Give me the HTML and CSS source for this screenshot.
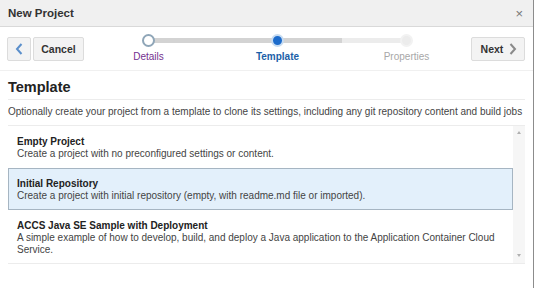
FILE: index.html
```html
<!DOCTYPE html>
<html>
<head>
<meta charset="utf-8">
<link rel="stylesheet" href="styles.css">
</head>
<body>
<div class="dialog">
  <div class="header">
    <span class="title">New Project</span>
    <span class="close">×</span>
  </div>
  <div class="toolbar">
    <button class="btn btn-back" aria-label="Back">
      <svg width="8" height="12" viewBox="0 0 8 12"><path d="M6.5 1 L2 6 L6.5 11" fill="none" stroke="#5b8fcb" stroke-width="2"/></svg>
    </button>
    <button class="btn btn-cancel">Cancel</button>
    <div class="stepper">
      <div class="track"><div class="track-done"></div></div>
      <div class="step done">
        <span class="dot"></span>
        <span class="label">Details</span>
      </div>
      <div class="step current">
        <span class="dot"></span>
        <span class="label">Template</span>
      </div>
      <div class="step todo">
        <span class="dot"></span>
        <span class="label">Properties</span>
      </div>
    </div>
    <button class="btn btn-next">Next
      <svg width="8" height="12" viewBox="0 0 8 12"><path d="M1.5 1 L6 6 L1.5 11" fill="none" stroke="#8a8a8a" stroke-width="2"/></svg>
    </button>
  </div>
  <div class="content">
    <h2 class="heading">Template</h2>
    <p class="desc">Optionally create your project from a template to clone its settings, including any git repository content and build jobs</p>
    <div class="list">
      <div class="items">
        <div class="item">
          <div class="item-title">Empty Project</div>
          <div class="item-desc">Create a project with no preconfigured settings or content.</div>
        </div>
        <div class="item selected">
          <div class="item-title">Initial Repository</div>
          <div class="item-desc">Create a project with initial repository (empty, with readme.md file or imported).</div>
        </div>
        <div class="item">
          <div class="item-title">ACCS Java SE Sample with Deployment</div>
          <div class="item-desc">A simple example of how to develop, build, and deploy a Java application to the Application Container Cloud Service.</div>
        </div>
      </div>
      <div class="scrollbar">
        <span class="arrow up"></span>
        <span class="arrow down"></span>
      </div>
    </div>
  </div>
</div>
</body>
</html>
```
FILE: styles.css
```css
* { box-sizing: border-box; }
html, body { margin: 0; padding: 0; background: #fff; }
body {
  font-family: "Liberation Sans", Arial, sans-serif;
  color: #333;
  width: 536px;
  height: 288px;
  overflow: hidden;
}
.dialog {
  width: 534px;
  height: 288px;
  border-right: 1px solid #8c8c8c;
  background: #fff;
}
.header {
  height: 27px;
  background: #f0f0f0;
  border-bottom: 1px solid #d9d9d9;
  display: flex;
  align-items: center;
  justify-content: space-between;
  padding: 0 10px 0 8px;
}
.title {
  font-weight: bold;
  font-size: 11.5px;
  color: #333;
}
.close {
  font-size: 13px;
  color: #777;
  line-height: 1;
}
.toolbar {
  display: flex;
  align-items: flex-start;
  padding: 10px 8px 0 7px;
  height: 44px;
  border-bottom: 1px solid #f0f0f0;
}
.btn {
  height: 24px;
  border: 1px solid #dcdcdc;
  border-radius: 2px;
  background: #f3f3f3;
  font-family: "Liberation Sans", Arial, sans-serif;
  font-weight: bold;
  font-size: 10.5px;
  color: #333;
  display: flex;
  align-items: center;
  justify-content: center;
  padding: 0;
  margin: 0;
}
.btn-back { width: 24px; }
.btn-cancel { width: 51px; margin-left: 2px; }
.btn-next { width: 54px; gap: 6px; padding-left: 2px; }
.stepper {
  flex: 1;
  position: relative;
  display: grid;
  grid-template-columns: 1fr 1fr 1fr;
  margin-top: -3px;
}
.track {
  position: absolute;
  left: 16.667%;
  right: 16.667%;
  top: 4px;
  height: 5px;
  background: #ececec;
}
.track-done {
  width: 75%;
  height: 100%;
  background: #d3d3d3;
}
.step {
  position: relative;
  display: flex;
  flex-direction: column;
  align-items: center;
}
.dot {
  width: 13px;
  height: 13px;
  border-radius: 50%;
  box-sizing: border-box;
}
.done .dot { background: #fff; border: 2px solid #8fa6b8; }
.current .dot { background: #1c6bcb; border: 2px solid #c6dbf1; }
.todo .dot { background: #ececec; border: 2px solid #f2f2f2; }
.label {
  margin-top: 4px;
  font-size: 10px;
}
.done .label { color: #74308f; }
.current .label { color: #1c5fa8; font-weight: bold; }
.todo .label { color: #a7a7a7; }
.content {
  padding: 0 8px;
}
.heading {
  margin: 0;
  font-size: 14.5px;
  font-weight: bold;
  color: #222;
  height: 29px;
  line-height: 24px;
  padding-top: 4px;
  border-bottom: 1px solid #ececec;
}
.desc {
  margin: 0;
  font-size: 10px;
  height: 26px;
  line-height: 23px;
  color: #444;
  border-bottom: 1px solid #ececec;
  white-space: nowrap;
}
.list {
  display: flex;
  height: 138px;
  border-bottom: 1px solid #ececec;
}
.items {
  flex: 1;
}
.item {
  border: 1px solid transparent;
  padding: 9px 8px 7px;
  font-size: 10px;
  line-height: 12px;
}
.item.selected {
  background: #e3f0fb;
  border-color: #a6b5c2;
}
.item-title {
  font-weight: bold;
  color: #222;
}
.item-desc { color: #444; }
.scrollbar {
  width: 12px;
  background: #f6f6f6;
  position: relative;
  display: flex;
  flex-direction: column;
  justify-content: space-between;
  align-items: center;
  padding: 5px 0 6px;
}
.arrow {
  width: 0;
  height: 0;
  border-left: 2.5px solid transparent;
  border-right: 2.5px solid transparent;
}
.arrow.up { border-bottom: 3px solid #b0b0b0; }
.arrow.down { border-top: 3px solid #b0b0b0; }
```
